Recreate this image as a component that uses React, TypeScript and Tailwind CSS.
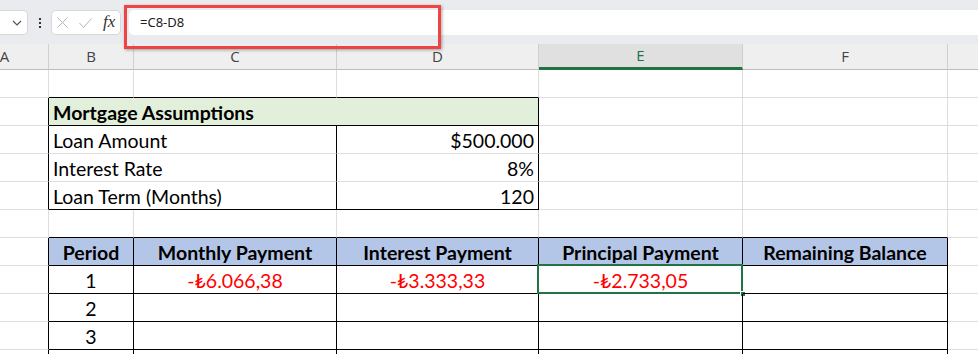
import React from "react";

type CellProps = {
  span?: number;
  className?: string;
  children?: React.ReactNode;
};

function Cell({ span = 1, className = "", children }: CellProps) {
  const spanCls = span === 3 ? "col-span-3" : span === 2 ? "col-span-2" : "";
  return (
    <div
      className={`relative h-[28px] box-border border-r border-b flex items-center px-[4px] pt-[2px] whitespace-nowrap overflow-visible ${spanCls} ${className}`}
    >
      {children}
    </div>
  );
}

const G = "border-r-[#dedede] border-b-[#dedede]";
const T = "text-[19.5px]";

export default function App() {
  const headers = ["A", "B", "C", "D", "E", "F", ""];
  return (
    <div className="w-[978px] h-[354px] overflow-hidden bg-white relative" style={{ fontFamily: "Lato, 'Noto Sans', sans-serif" }}>
      {/* Formula bar */}
      <div className="h-[44px] bg-[#e9ebee] flex items-start pt-[10px]">
        <div className="w-[28px] h-[25px] bg-white rounded-r-[5px] border border-l-0 border-[#d6d8db] flex items-center justify-end pr-[5px]">
          <svg width="10" height="6" viewBox="0 0 10 6">
            <polyline points="1,1 5,5 9,1" fill="none" stroke="#555" strokeWidth="1.2" />
          </svg>
        </div>
        <div className="w-[23px] h-[25px] flex flex-col items-center justify-center gap-[2px]">
          <div className="w-[2px] h-[2px] bg-[#333]" />
          <div className="w-[2px] h-[2px] bg-[#333]" />
          <div className="w-[2px] h-[2px] bg-[#333]" />
        </div>
        <div className="w-[70px] h-[25px] bg-white rounded-[5px] border border-[#d6d8db] flex items-center pl-[5px] gap-[11px]">
          <svg width="11" height="11" viewBox="0 0 11 11">
            <path d="M0.5 0.5 L10.5 10.5 M10.5 0.5 L0.5 10.5" stroke="#b5b5b5" strokeWidth="1" fill="none" />
          </svg>
          <svg width="13" height="10" viewBox="0 0 13 10">
            <polyline points="0.5,5 4.5,9.5 12.5,0.5" stroke="#b5b5b5" strokeWidth="1" fill="none" />
          </svg>
          <span className="italic text-[17px] leading-none text-[#333] -mt-[3px]" style={{ fontFamily: "'Liberation Serif', serif" }}>
            fx
          </span>
        </div>
        <div className="ml-[8px] flex-1 h-[25px] bg-white rounded-l-[5px] flex items-center pl-[11px] text-[13px] text-[#222]" style={{ fontFamily: "'Noto Sans', 'Open Sans', sans-serif" }}>
          =C8-D8
        </div>
      </div>

      {/* Red annotation rectangle */}
      <div className="absolute left-[124px] top-[5px] w-[317px] h-[44px] border-[3px] border-[#ef4444] shadow-[1px_1px_3px_rgba(0,0,0,0.35)]" />

      {/* Sheet */}
      <div className="overflow-hidden">
        <div className="ml-[-39px] grid grid-cols-[88px_85px_203px_202px_204px_205px_100px]">
          {/* column headers */}
          {headers.map((h, i) => (
            <div
              key={i}
              className={`h-[26px] box-border border-r border-r-[#cfcfcf] flex items-center justify-center text-[15px] ${
                h === "E"
                  ? "bg-[#e0e0e0] text-[#1e7145] border-b-[3px] border-b-[#217346]"
                  : "bg-[#efefef] text-[#444] border-b border-b-[#bdbdbd]"
              }`}
              style={{ fontFamily: "'Open Sans', 'Liberation Sans', sans-serif" }}
            >
              {h}
            </div>
          ))}

          {/* Row 1 blank */}
          <Cell className={G} />
          <Cell className="border-r-[#dedede] border-b-black" />
          <Cell className="border-r-[#dedede] border-b-black" />
          <Cell className="border-r-[#dedede] border-b-black" />
          <Cell className={G} />
          <Cell className={G} />
          <Cell className={G} />

          {/* Row 2 mortgage header */}
          <Cell className="border-r-black border-b-[#dedede]" />
          <Cell span={3} className={`bg-[#e2efda] border-r-black border-b-black font-bold ${T} text-black`}>
            Mortgage Assumptions
          </Cell>
          <Cell className={G} />
          <Cell className={G} />
          <Cell className={G} />

          {[
            ["Loan Amount", "$500.000"],
            ["Interest Rate", "8%"],
            ["Loan Term (Months)", "120"],
          ].map(([l, v], i) => {
            const bb = i === 2 ? "border-b-black" : "border-b-[#dedede]";
            return (
              <React.Fragment key={l}>
                <Cell className="border-r-black border-b-[#dedede]" />
                <Cell span={2} className={`border-r-black ${bb} ${T} text-black`}>
                  {l}
                </Cell>
                <Cell className={`border-r-black ${bb} ${T} text-black justify-end`}>{v}</Cell>
                <Cell className={G} />
                <Cell className={G} />
                <Cell className={G} />
              </React.Fragment>
            );
          })}

          {/* Row 6 blank */}
          <Cell className={G} />
          <Cell className="border-r-[#dedede] border-b-black" />
          <Cell className="border-r-[#dedede] border-b-black" />
          <Cell className="border-r-[#dedede] border-b-black" />
          <Cell className="border-r-[#dedede] border-b-black" />
          <Cell className="border-r-[#dedede] border-b-black" />
          <Cell className={G} />

          {/* Row 7 header */}
          <Cell className="border-r-black border-b-[#dedede]" />
          {["Period", "Monthly Payment", "Interest Payment", "Principal Payment", "Remaining Balance"].map((h) => (
            <Cell key={h} className={`bg-[#b4c6e7] border-r-black border-b-black font-bold ${T} text-black justify-center`}>
              {h}
            </Cell>
          ))}
          <Cell className={G} />

          {/* Data rows */}
          {[
            ["1", "-₺6.066,38", "-₺3.333,33", "-₺2.733,05"],
            ["2", "", "", ""],
            ["3", "", "", ""],
            ["", "", "", ""],
          ].map((row, i) => (
            <React.Fragment key={i}>
              <Cell className="border-r-black border-b-[#dedede]" />
              <Cell className={`border-r-black border-b-black ${T} text-black justify-center`}>{row[0]}</Cell>
              <Cell className={`border-r-black border-b-black ${T} text-[#ff0000] justify-center`}>{row[1]}</Cell>
              <Cell className={`border-r-black border-b-black ${T} text-[#ff0000] justify-center`}>{row[2]}</Cell>
              <Cell className={`border-r-black border-b-black ${T} text-[#ff0000] justify-center`}>
                {row[3]}
                {i === 0 && (
                  <>
                    <div className="absolute left-[-2px] top-[-2px] right-[-1px] bottom-[-1px] border-2 border-[#217346]" />
                    <div className="absolute right-[-4px] bottom-[-4px] w-[6px] h-[6px] bg-[#217346] border border-white" />
                  </>
                )}
              </Cell>
              <Cell className="border-r-black border-b-black" />
              <Cell className={G} />
            </React.Fragment>
          ))}
        </div>
      </div>
    </div>
  );
}
